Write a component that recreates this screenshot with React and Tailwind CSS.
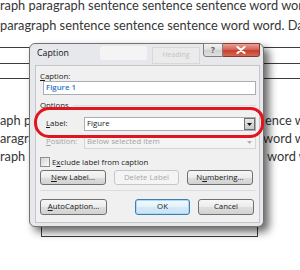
export default function App() {
  const btn =
    "flex items-center justify-center h-full border border-[#707070] rounded-[3px] bg-[linear-gradient(#f6f6f6_0%,#ececec_50%,#dedede_51%,#d2d2d2_100%)] text-[#1a1a1a] leading-none";
  return (
    <div className="relative w-[300px] h-[270px] overflow-hidden bg-white">
      {/* document behind */}
      <div className="flex flex-col font-['Lato','Liberation_Sans',sans-serif] text-[12.8px] text-[#363636]">
        <div className="-mt-[5px] h-[20px] leading-[20px] whitespace-nowrap overflow-hidden">
          raph paragraph sentence sentence sentence word word word
        </div>
        <div className="h-[20px] leading-[20px] whitespace-nowrap overflow-hidden">
          paragraph sentence sentence sentence word word. Data
        </div>
        <div className="mt-[12px] h-[16px] border-t border-[#3c3c3c]" />
        <div className="h-[15px] border-t border-[#3c3c3c]" />
        <div className="border-t border-[#3c3c3c]" />
        <div className="mt-[32px] flex h-[18px] leading-[18px] whitespace-nowrap overflow-hidden">
          <span className="w-[265px] shrink-0 overflow-hidden">aph paragraph sentence sentence</span>
          <span>ence word</span>
        </div>
        <div className="flex h-[18px] leading-[18px] whitespace-nowrap overflow-hidden">
          <span className="w-[263px] shrink-0 overflow-hidden">aragraph sentence sentence</span>
          <span>word word</span>
        </div>
        <div className="flex h-[18px] leading-[18px] whitespace-nowrap overflow-hidden">
          <span className="w-[267px] shrink-0 overflow-hidden">raph paragraph sentence</span>
          <span>word word</span>
        </div>
        <div className="mt-[35px] ml-[41px] w-[217px] h-[37px] border-l border-r border-b border-[#3c3c3c]" />
      </div>

      {/* dialog */}
      <div className="absolute left-[29px] top-[43px] w-[235px] h-[184px] flex flex-col rounded-[6px] border border-[#727272] bg-[#e6e8eb] shadow-[5px_5px_9px_rgba(0,0,0,0.6)] font-['Open_Sans','Noto_Sans',sans-serif] text-[#1a1a1a]">
        {/* title bar */}
        <div className="h-[21px] flex items-start pl-[7px]">
          <span className="w-[63px] mt-[3px] text-[8.8px] leading-[12px] text-[#111]">Caption</span>
          <div className="mt-[2px] w-[47px] h-[14px] rounded-[3px] bg-[#f4f4f4]" />
          <div className="ml-[5px] mt-[3px] w-[48px] h-[17px] border border-[#d8d8d8] bg-[#ebebeb] flex items-center justify-center text-[7px] text-[#c4c4c4]">
            Heading
          </div>
          <div className="ml-[3px] -mt-[1px] w-[20px] h-[14px] rounded-bl-[3px] border border-[#7e7e7e] bg-[linear-gradient(#f4f4f4,#dcdcdc_50%,#cfcfcf_51%,#e0e0e0)] flex items-center justify-center text-[8px] font-bold text-[#555] leading-none">
            ?
          </div>
          <div className="-mt-[1px] w-[37px] h-[14px] rounded-br-[3px] border border-[#8a3a32] border-l-0 bg-[linear-gradient(#eaa094,#d9655a_45%,#c4402f_55%,#d46a55)] flex items-center justify-center">
            <svg width="10" height="8" viewBox="0 0 10 8">
              <path d="M1.5 1 L8.5 7 M8.5 1 L1.5 7" stroke="#fff" strokeWidth="2" strokeLinecap="round" />
            </svg>
          </div>
        </div>

        {/* content area */}
        <div className="ml-[5px] mr-[3px] h-[158px] border border-[#c3c7cc] bg-[#f0f0f0] pl-[4px] pr-[3px] flex flex-col text-[7.8px]">
          <div className="mt-[5px] h-[10px] leading-[10px]">
            <span className="underline">C</span>aption:
          </div>
          <div className="ml-[3px] h-[14px] border border-[#abadb3] bg-white flex items-center pl-[2px] text-[#2d72c8] font-semibold">
            Figure 1
          </div>
          <div className="mt-[5px] h-[10px] flex items-center">
            <span className="leading-[10px]">Options</span>
            <div className="ml-[4px] flex-1 border-t border-[#dcdcdc]" />
          </div>
          <div className="mt-[7px] h-[14px] flex items-center">
            <span className="w-[44px] pl-[6px]">
              <span className="underline">L</span>abel:
            </span>
            <div className="flex-1 h-full border border-[#abadb3] bg-white flex items-center pl-[2px]">
              <span className="flex-1">Figure</span>
              <div className="w-[11px] h-[12px] border border-[#6f6f6f] bg-[linear-gradient(#e8e8e8,#c9c9c9)] flex items-center justify-center">
                <svg width="5" height="3" viewBox="0 0 5 3">
                  <path d="M0 0 H5 L2.5 3 Z" fill="#111" />
                </svg>
              </div>
            </div>
          </div>
          <div className="mt-[4px] h-[14px] flex items-center text-[#a3a3a3]">
            <span className="w-[44px] pl-[6px]">
              <span className="underline">P</span>osition:
            </span>
            <div className="flex-1 h-full border border-[#d3d5d8] bg-[#f4f4f4] flex items-center pl-[2px]">
              <span className="flex-1">Below selected item</span>
              <div className="w-[11px] h-[12px] flex items-center justify-center">
                <svg width="5" height="3" viewBox="0 0 5 3">
                  <path d="M0 0 H5 L2.5 3 Z" fill="#b0b0b0" />
                </svg>
              </div>
            </div>
          </div>
          <div className="mt-[8px] h-[10px] flex items-center">
            <div className="w-[10px] h-[10px] border border-[#8e8f8f] bg-[linear-gradient(135deg,#d0d3d8,#fbfbfb)]" />
            <span className="ml-[2px] leading-[10px]">
              E<span className="underline">x</span>clude label from caption
            </span>
          </div>
          <div className="mt-[3px] h-[15px] flex gap-[8px]">
            <div className={btn + " w-[66px]"}>
              <span>
                <span className="underline">N</span>ew Label...
              </span>
            </div>
            <div className="w-[65px] h-full flex items-center justify-center border border-[#c5c8cb] rounded-[3px] bg-[#f4f4f4] text-[#a8a8a8] leading-none">
              Delete Label
            </div>
            <div className={btn + " w-[66px]"}>
              <span>
                N<span className="underline">u</span>mbering...
              </span>
            </div>
          </div>
          <div className="mt-[5px] border-t border-[#d6dde3]" />
          <div className="mt-[8px] h-[16px] flex">
            <div className={btn + " w-[67px]"}>
              <span>
                <span className="underline">A</span>utoCaption...
              </span>
            </div>
            <div className="ml-[28px] w-[55px] h-full flex items-center justify-center border border-[#3c7fb1] rounded-[3px] bg-[linear-gradient(#f3f9fd_0%,#e4f1fb_50%,#d4e8f7_51%,#cde3f4_100%)] shadow-[inset_0_0_0_1px_#a9dbf6] leading-none">
              OK
            </div>
            <div className={btn + " ml-[8px] w-[56px]"}>Cancel</div>
          </div>
        </div>
      </div>

      {/* red highlight */}
      <div className="absolute left-[34px] top-[107px] w-[230px] h-[31px] border-[3px] border-[#e3141d] rounded-[15px_13px_14px_15px/15px_13px_14px_15px]" />
    </div>
  );
}
